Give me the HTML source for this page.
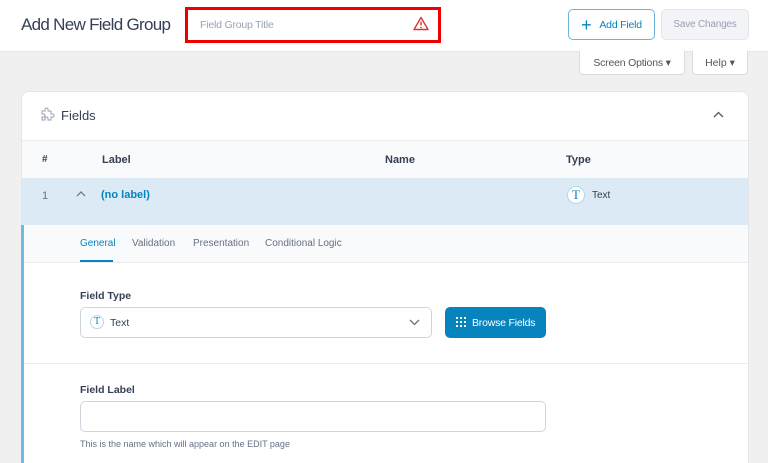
<!DOCTYPE html>
<html style="width:768px;height:463px;overflow:hidden"><head><style>
*{margin:0;padding:0;box-sizing:border-box}
body{width:768px;height:463px;overflow:hidden;background:#f0f0f1;font-family:"Liberation Sans",sans-serif;position:relative;color:#344054}
.a{position:absolute;white-space:nowrap}
.btn{display:flex;align-items:center;justify-content:center}
</style></head><body>
<div class="a" style="left:0;top:0;width:768px;height:52px;background:#fff;border-bottom:1px solid #e4e6ea"></div>
<div class="a" style="left:21px;top:15px;font-size:17px;color:#344054;letter-spacing:-0.7px">Add New Field Group</div>
<div class="a" style="left:185px;top:7px;width:256px;height:36px;border:3px solid #e00;background:#fff"></div>
<div class="a" style="left:200px;top:19px;font-size:10.5px;color:#98a2b3;letter-spacing:-0.2px">Field Group Title</div>
<svg class="a" style="left:413px;top:16px" width="16" height="15" viewBox="0 0 16 15"><path d="M8 1.5L15 13.5H1Z" fill="none" stroke="#d63638" stroke-width="1.4" stroke-linejoin="round"/><path d="M8 5.5v4" stroke="#d63638" stroke-width="1.4"/><circle cx="8" cy="11.5" r=".8" fill="#d63638"/></svg>
<div class="a btn" style="left:568px;top:9px;width:87px;height:31px;border:1px solid #6bb5d8;border-radius:5px;background:#fff;font-size:10.5px;color:#0783be;letter-spacing:-0.2px"><span style="font-size:18px;margin-right:8px;line-height:18px">+</span>Add Field</div>
<div class="a btn" style="left:661px;top:9px;width:88px;height:31px;border:1px solid #e4e6ea;border-radius:5px;background:#f2f4f7;font-size:10px;color:#98a2b3;letter-spacing:-0.2px">Save Changes</div>
<div class="a btn" style="left:579px;top:51px;width:106px;height:24px;background:#fff;border:1px solid #dcdcde;border-top:none;border-radius:0 0 4px 4px;font-size:10.5px;color:#50575e;padding-top:1px;letter-spacing:-0.2px">Screen Options ▾</div>
<div class="a btn" style="left:692px;top:51px;width:56px;height:24px;background:#fff;border:1px solid #dcdcde;border-top:none;border-radius:0 0 4px 4px;font-size:10.5px;color:#50575e;padding-top:1px">Help ▾</div>
<div class="a" style="left:21px;top:91px;width:728px;height:380px;background:#fff;border:1px solid #e4e6ea;border-radius:8px"></div>
<svg class="a" style="left:39px;top:107px" width="16" height="16" viewBox="0 0 16 16"><path d="M6 2.5a1.5 1.5 0 0 1 3 0V4h3v3h1.5a1.5 1.5 0 0 1 0 3H12v3H9v-1.5a1.5 1.5 0 0 0-3 0V13H3v-3h1.5a1.5 1.5 0 0 0 0-3H3V4h3Z" fill="none" stroke="#98a2b3" stroke-width="1"/></svg>
<div class="a" style="left:61px;top:108px;font-size:13px;color:#344054">Fields</div>
<svg class="a" style="left:713px;top:111px" width="11" height="8"><path d="M1 6l4.5-4.5L10 6" fill="none" stroke="#50575e" stroke-width="1.3"/></svg>
<div class="a" style="left:22px;top:140px;width:726px;height:38px;background:#f9fafb;border-top:1px solid #eaecf0"></div>
<div class="a" style="left:42px;top:154px;font-size:10px;font-weight:bold;color:#344054">#</div>
<div class="a" style="left:102px;top:154px;font-size:11px;font-weight:bold;color:#344054">Label</div>
<div class="a" style="left:385px;top:154px;font-size:11px;font-weight:bold;color:#344054">Name</div>
<div class="a" style="left:566px;top:154px;font-size:11px;font-weight:bold;color:#344054">Type</div>
<div class="a" style="left:22px;top:178px;width:726px;height:47px;background:#dbeaf4"></div>
<div class="a" style="left:42px;top:190px;font-size:11px;color:#667085">1</div>
<svg class="a" style="left:76px;top:190px" width="10" height="8"><path d="M1 6l4-4 4 4" fill="none" stroke="#667085" stroke-width="1.2"/></svg>
<div class="a" style="left:101px;top:189px;font-size:11px;font-weight:bold;color:#0783be">(no label)</div>
<div class="a" style="left:567px;top:186px;width:18px;height:18px;border-radius:50%;background:#fff;border:1px solid #b8d6ea;color:#0783be;font:13px 'Liberation Serif',serif;text-align:center;line-height:16px">T</div>
<div class="a" style="left:592px;top:190px;font-size:10px;color:#344054">Text</div>
<div class="a" style="left:21px;top:225px;width:3px;height:240px;background:#72b9e0"></div>
<div class="a" style="left:24px;top:225px;width:724px;height:38px;background:#f9fafb;border-bottom:1px solid #eaecf0"></div>
<div class="a" style="left:80px;top:238px;font-size:10px;color:#0783be">General</div>
<div class="a" style="left:80px;top:260px;width:33px;height:2px;background:#0783be"></div>
<div class="a" style="left:132px;top:238px;font-size:10px;color:#667085">Validation</div>
<div class="a" style="left:193px;top:238px;font-size:10px;color:#667085">Presentation</div>
<div class="a" style="left:265px;top:238px;font-size:10px;color:#667085">Conditional Logic</div>
<div class="a" style="left:80px;top:290px;font-size:10.5px;font-weight:bold;color:#344054">Field Type</div>
<div class="a" style="left:80px;top:307px;width:352px;height:31px;border:1px solid #d0d5dd;border-radius:5px;background:#fff"></div>
<div class="a" style="left:90px;top:315px;width:14px;height:14px;border-radius:50%;border:1px solid #b8d6ea;color:#0783be;font:10px 'Liberation Serif',serif;text-align:center;line-height:12px">T</div>
<div class="a" style="left:110px;top:317px;font-size:10.5px;color:#344054">Text</div>
<svg class="a" style="left:409px;top:319px" width="11" height="7"><path d="M1 1l4.5 4.5L10 1" fill="none" stroke="#667085" stroke-width="1.3"/></svg>
<div class="a" style="left:445px;top:307px;width:101px;height:31px;border-radius:5px;background:#0783be"></div>
<svg class="a" style="left:456px;top:317px" width="11" height="11"><g fill="#fff"><rect x="0" y="0" width="2" height="2"/><rect x="4" y="0" width="2" height="2"/><rect x="8" y="0" width="2" height="2"/><rect x="0" y="4" width="2" height="2"/><rect x="4" y="4" width="2" height="2"/><rect x="8" y="4" width="2" height="2"/><rect x="0" y="8" width="2" height="2"/><rect x="4" y="8" width="2" height="2"/><rect x="8" y="8" width="2" height="2"/></g></svg>
<div class="a" style="left:472px;top:317px;font-size:10.5px;color:#fff;letter-spacing:-0.2px">Browse Fields</div>
<div class="a" style="left:24px;top:363px;width:724px;height:1px;background:#eaecf0"></div>
<div class="a" style="left:80px;top:384px;font-size:10.5px;font-weight:bold;color:#344054">Field Label</div>
<div class="a" style="left:80px;top:401px;width:466px;height:31px;border:1px solid #d0d5dd;border-radius:5px;background:#fff"></div>
<div class="a" style="left:80px;top:439px;font-size:9px;color:#667085">This is the name which will appear on the EDIT page</div>
</body></html>
